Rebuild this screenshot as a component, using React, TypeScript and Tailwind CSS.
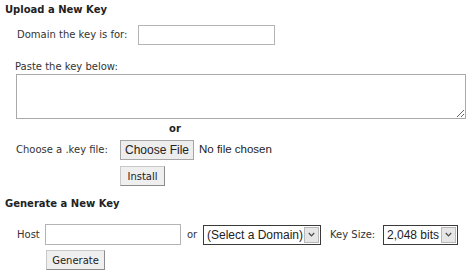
import React from "react";

const Chevron = () => (
  <span className="flex h-full w-[15px] items-center justify-center border border-[#b8b8b8] bg-[#e6e6e6]">
    <svg width="7" height="5" viewBox="0 0 7 5">
      <path d="M0.8 1 L3.5 3.8 L6.2 1" fill="none" stroke="#4a4a4a" strokeWidth="1.2" />
    </svg>
  </span>
);

export default function App() {
  const verdana = "font-['DejaVu_Sans',Verdana,sans-serif]";
  const arial = "font-['Liberation_Sans',Arial,sans-serif]";
  return (
    <div className={`h-[278px] w-[474px] bg-white ${verdana} text-[10px] text-[#333]`}>
      <div className="pl-[5px] pt-[3px] text-[10px] font-bold leading-[14px] text-[#222]">Upload a New Key</div>

      <div className="mt-[8px] flex h-[20px] items-center pl-[17px]">
        <span className="w-[121px] whitespace-nowrap leading-[14px]">Domain the key is for:</span>
        <input className="h-[20px] w-[137px] border border-[#b4b4b4] bg-white outline-none" />
      </div>

      <div className="mt-[15px] pl-[15px] leading-[14px]">Paste the key below:</div>
      <div className="pl-[16px]">
        <textarea className="block h-[45px] w-[450px] resize border border-[#a9a9a9] bg-white outline-none" />
      </div>

      <div className="mt-[3px] w-[350px] text-center font-bold leading-[14px] text-[#222]">or</div>

      <div className="mt-[4px] flex h-[20px] items-center pl-[16px]">
        <span className="w-[104px] whitespace-nowrap leading-[14px]">Choose a .key file:</span>
        <button className={`h-[20px] w-[74px] border border-[#a6a6a6] bg-[#ededed] ${arial} text-[12px] text-[#222]`}>
          Choose File
        </button>
        <span className={`ml-[5px] whitespace-nowrap ${arial} text-[11.5px] text-[#222]`}>No file chosen</span>
      </div>

      <div className="mt-[6px] pl-[120px]">
        <button className="h-[20px] w-[45px] border border-[#c8c8c8] border-b-[#8c8c8c] border-r-[#8c8c8c] bg-[#efefef] text-[10px] text-[#222]">
          Install
        </button>
      </div>

      <div className="mt-[11px] pl-[5px] font-bold leading-[14px] text-[#222]">Generate a New Key</div>

      <div className="mt-[13px] flex h-[21px] items-center pl-[17px]">
        <span className="w-[28px] whitespace-nowrap leading-[14px]">Host</span>
        <input className="h-[21px] w-[136px] border border-[#b4b4b4] bg-white outline-none" />
        <span className="ml-[6px] w-[16px] whitespace-nowrap leading-[14px]">or</span>
        <div className="flex h-[20px] w-[118px] items-center border border-[#3a3a3a] bg-white p-[1px]">
          <span className={`flex-1 whitespace-nowrap pl-[2px] ${arial} text-[12px] leading-[16px] text-[#222]`}>(Select a Domain)</span>
          <Chevron />
        </div>
        <span className="ml-[9px] w-[53px] whitespace-nowrap leading-[14px]">Key Size:</span>
        <div className="flex h-[20px] w-[75px] items-center border border-[#3a3a3a] bg-white p-[1px]">
          <span className={`flex-1 whitespace-nowrap pl-[2px] ${arial} text-[12px] leading-[16px] text-[#222]`}>2,048 bits</span>
          <Chevron />
        </div>
      </div>

      <div className="mt-[5px] pl-[46px]">
        <button className="h-[20px] w-[59px] border border-[#c8c8c8] border-b-[#8c8c8c] border-r-[#8c8c8c] bg-[#efefef] text-[10px] text-[#222]">
          Generate
        </button>
      </div>
    </div>
  );
}
